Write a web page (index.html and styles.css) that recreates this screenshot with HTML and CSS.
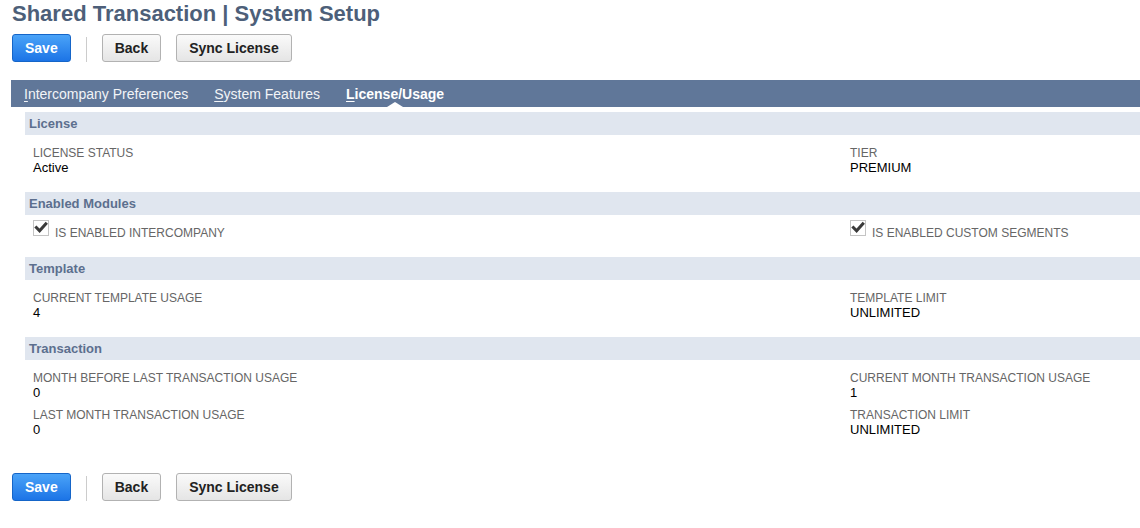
FILE: index.html
```html
<!DOCTYPE html>
<html lang="en">
<head>
<meta charset="utf-8">
<title>Shared Transaction | System Setup</title>
<link rel="stylesheet" href="styles.css">
</head>
<body>
<div class="page">
  <h1 class="title">Shared Transaction | System Setup</h1>
  <div class="toolbar">
    <button class="btn btn-primary">Save</button>
    <span class="sep"></span>
    <button class="btn">Back</button>
    <button class="btn">Sync License</button>
  </div>

  <div class="tabs">
    <span class="tab"><u>I</u>ntercompany Preferences</span>
    <span class="tab"><u>S</u>ystem Features</span>
    <span class="tab active"><u>L</u>icense/Usage</span>
  </div>

  <div class="content">
    <div class="section-head">License</div>
    <div class="section-body fields">
      <div class="col">
        <div class="field"><div class="label">LICENSE STATUS</div><div class="value">Active</div></div>
      </div>
      <div class="col">
        <div class="field"><div class="label">TIER</div><div class="value">PREMIUM</div></div>
      </div>
    </div>

    <div class="section-head">Enabled Modules</div>
    <div class="section-body checks fields">
      <div class="col">
        <div class="check">
          <span class="box"><svg viewBox="0 0 16 16" width="16" height="16"><path d="M3.4 7.6 L6.6 10.8 L12.8 3.8" fill="none" stroke="#3a3a3a" stroke-width="3" stroke-linecap="square" stroke-linejoin="miter"/></svg></span>
          <span class="check-label">IS ENABLED INTERCOMPANY</span>
        </div>
      </div>
      <div class="col">
        <div class="check">
          <span class="box"><svg viewBox="0 0 16 16" width="16" height="16"><path d="M3.4 7.6 L6.6 10.8 L12.8 3.8" fill="none" stroke="#3a3a3a" stroke-width="3" stroke-linecap="square" stroke-linejoin="miter"/></svg></span>
          <span class="check-label">IS ENABLED CUSTOM SEGMENTS</span>
        </div>
      </div>
    </div>

    <div class="section-head">Template</div>
    <div class="section-body fields">
      <div class="col">
        <div class="field"><div class="label">CURRENT TEMPLATE USAGE</div><div class="value">4</div></div>
      </div>
      <div class="col">
        <div class="field"><div class="label">TEMPLATE LIMIT</div><div class="value">UNLIMITED</div></div>
      </div>
    </div>

    <div class="section-head">Transaction</div>
    <div class="section-body fields">
      <div class="col">
        <div class="field"><div class="label">MONTH BEFORE LAST TRANSACTION USAGE</div><div class="value">0</div></div>
        <div class="field"><div class="label">LAST MONTH TRANSACTION USAGE</div><div class="value">0</div></div>
      </div>
      <div class="col">
        <div class="field"><div class="label">CURRENT MONTH TRANSACTION USAGE</div><div class="value">1</div></div>
        <div class="field"><div class="label">TRANSACTION LIMIT</div><div class="value">UNLIMITED</div></div>
      </div>
    </div>
  </div>

  <div class="toolbar toolbar-bottom">
    <button class="btn btn-primary">Save</button>
    <span class="sep"></span>
    <button class="btn">Back</button>
    <button class="btn">Sync License</button>
  </div>
</div>
</body>
</html>
```

FILE: styles.css
```css
html, body {
  margin: 0;
  padding: 0;
  background: #ffffff;
}

body {
  font-family: "Liberation Sans", Arial, sans-serif;
  color: #000;
  width: 1140px;
  overflow: hidden;
}

.page {
  padding-left: 11px;
}

.title {
  margin: 0 0 0 1px;
  font-size: 22px;
  line-height: 27px;
  font-weight: bold;
  color: #4d5f79;
}

.toolbar {
  display: flex;
  align-items: center;
  margin-top: 7px;
  padding-left: 1px;
  height: 28px;
}

.toolbar-bottom {
  margin-top: 19px;
}

.btn {
  font-family: "Liberation Sans", Arial, sans-serif;
  font-size: 14px;
  font-weight: bold;
  height: 28px;
  padding: 0 12px;
  margin: 0 15px 0 0;
  border: 1px solid #b2b2b2;
  border-radius: 3px;
  background: linear-gradient(#fafafa, #e5e5e5);
  color: #222;
  line-height: 26px;
}

.btn-primary {
  background: linear-gradient(#4aa3f8, #1c74e6);
  border-color: #1565c8;
  color: #fff;
  margin-right: 0;
}

.sep {
  display: block;
  width: 1px;
  height: 25px;
  background: #cccccc;
  margin: 3px 15px 0 15px;
}

.tabs {
  display: flex;
  margin-top: 18px;
  background: #607799;
  height: 27px;
  box-sizing: border-box;
  padding: 6px 0 5px 0;
}

.tab {
  position: relative;
  font-size: 14px;
  line-height: 16px;
  color: #f2f4f7;
  padding: 0 13px;
  white-space: nowrap;
}

.tab u {
  text-decoration-thickness: 1px;
  text-underline-offset: 2px;
}

.tab.active {
  color: #fff;
  font-weight: bold;
}

.tab.active::after {
  content: "";
  position: absolute;
  left: 50%;
  bottom: -5px;
  margin-left: -8px;
  border-left: 8px solid transparent;
  border-right: 8px solid transparent;
  border-bottom: 5px solid #fff;
}

.content {
  margin-top: 5px;
  padding-left: 14px;
}

.section-head {
  background: #e0e6ef;
  height: 23px;
  line-height: 23px;
  font-size: 13px;
  font-weight: bold;
  color: #5c6f8e;
  padding-left: 4px;
}

.section-body {
  padding: 11px 0 17px 8px;
}

.section-body.checks {
  padding-top: 5px;
}

.fields {
  display: grid;
  grid-template-columns: 817px 1fr;
}

.col {
  display: flex;
  flex-direction: column;
  gap: 8px;
}

.label {
  font-size: 12px;
  line-height: 14px;
  color: #666666;
}

.value {
  font-size: 13px;
  line-height: 15px;
  color: #000;
}

.check {
  display: flex;
  align-items: flex-start;
  height: 20px;
}

.box {
  display: block;
  width: 14px;
  height: 14px;
  border: 1px solid #c4c4c4;
  background: #fff;
  position: relative;
  overflow: hidden;
}

.box svg {
  display: block;
  margin: -1px 0 0 -1px;
}

.check-label {
  font-size: 12px;
  line-height: 14px;
  color: #666666;
  margin: 6px 0 0 6px;
}
```
